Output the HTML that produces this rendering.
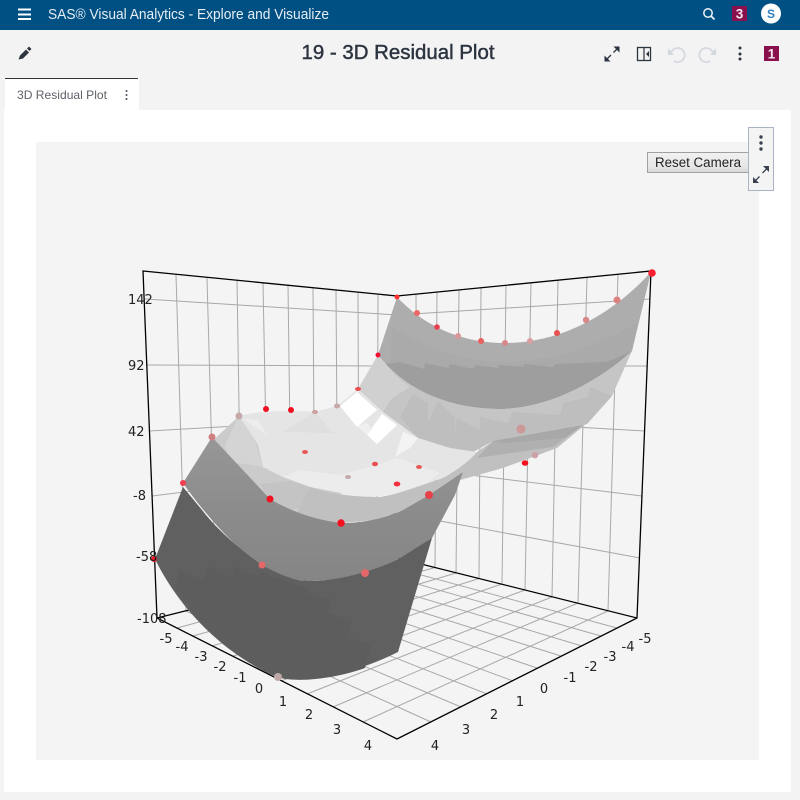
<!DOCTYPE html>
<html><head><meta charset="utf-8"><title>19 - 3D Residual Plot</title>
<style>
html,body{margin:0;padding:0;width:800px;height:800px;overflow:hidden;background:#f3f3f3}
svg{position:absolute;left:0;top:0}
</style></head><body>
<svg width="800" height="800" viewBox="0 0 800 800" xmlns="http://www.w3.org/2000/svg" font-family="'Liberation Sans',sans-serif">
<rect width="800" height="800" fill="#f3f3f3"/>
<rect width="800" height="30" fill="#005084"/>
<path d="M18 9.500h13M18 14.500h13M18 19h13" stroke="#fff" stroke-width="2"/>
<text x="48" y="19" font-size="14.400" fill="#e6eef4" textLength="281" lengthAdjust="spacingAndGlyphs">SAS® Visual Analytics - Explore and Visualize</text>
<circle cx="708" cy="13" r="4.200" fill="none" stroke="#f0f4f7" stroke-width="1.500"/><path d="M711 16l3.500 3.500" stroke="#f0f4f7" stroke-width="1.700"/>
<rect x="732" y="6" width="15" height="15" fill="#8a0f4d"/>
<text x="739.500" y="18.500" font-size="13.500" font-weight="bold" fill="#f2e6ec" text-anchor="middle">3</text>
<circle cx="771" cy="13.500" r="10" fill="#fff"/>
<text x="771" y="18" font-size="12" font-weight="bold" fill="#2f7fc1" text-anchor="middle">S</text>

<path d="M18.500 59.500l1.500-4 6-6 3 3-6 6z" fill="#2f3540"/><path d="M27 48.500l2-2 2.500 2.500-2 2z" fill="#2f3540"/>
<text x="398" y="59" font-size="20.500" fill="#2b3440" stroke="#2b3440" stroke-width=".45" text-anchor="middle" textLength="193" lengthAdjust="spacingAndGlyphs">19 - 3D Residual Plot</text>

<g stroke="#2b3440" fill="#2b3440">
<path d="M606.500 59.500l4.500-4.500M613.500 52.500l4.500-4.500" stroke-width="1.300"/>
<path d="M604.500 61.500v-6l6 6zM619.500 46.500v6l-6-6z" stroke="none"/>
<rect x="637.500" y="47.500" width="13" height="13" fill="none" stroke-width="1.300"/>
<path d="M644 47v14" stroke-width="1.200"/><path d="M649 51v6l-3-3z" stroke="none"/>
<circle cx="740" cy="48" r="1.500" stroke="none"/><circle cx="740" cy="54" r="1.500" stroke="none"/><circle cx="740" cy="59" r="1.500" stroke="none"/>
</g>
<g stroke="#d3d7de" fill="none" stroke-width="1.700">
<path d="M671 53a7 7 0 1 1 3 8"/><path d="M713 53a7 7 0 1 0-3 8"/>
</g>
<path d="M668 48v7h6zM716 48v7h-6z" fill="#d3d7de"/>
<rect x="764" y="46" width="15" height="15" fill="#8a0f4d"/>
<text x="771.500" y="58.500" font-size="13.500" font-weight="bold" fill="#f2e6ec" text-anchor="middle">1</text>

<rect x="4" y="110" width="787" height="682" fill="#fff"/>
<rect x="5" y="78" width="134" height="32" fill="#fff"/>
<path d="M5 78.500h133" stroke="#333" stroke-width="1"/>
<text x="17" y="99" font-size="12" fill="#5d6167" textLength="90" lengthAdjust="spacingAndGlyphs">3D Residual Plot</text>
<g fill="#444a52"><circle cx="126.500" cy="91" r="1"/><circle cx="126.500" cy="95" r="1"/><circle cx="126.500" cy="99" r="1"/></g>
<rect x="36" y="142" width="723" height="618" fill="#f4f4f4"/>

<!-- walls grid -->
<g stroke="#a8a8a8" stroke-width="1" fill="none">
<path d="M176 275L186 611M207 278L216 603.500M237 280L242 597.500M263 283L269 590.500M288 285L292 585M313 288L315 578.500M336 290L338 573M358 292L359 567.500M378 294L377 563"/>
<path d="M416 294L417 563M437 292L435 567.500M459 290L456 573M481 288L479 578.500M506 285L502 584M531 283L525 590M558 280L552 597M587 277L578 603M618 274L608 611"/>
<path d="M145 299L397 315M147 365L397 366M149 431L397 417M152 496L397 466M154 556L397 513"/>
<path d="M397 315L650 299M397 366L647 366M397 417L645 431M397 466L642 496M397 513L640 558"/>
<!-- floor -->
<path d="M186 611L431 722M216 603.500L461 707M242 597.500L487 694M269 590.500L513 681M292 585L537 668M315 578.500L561 656M338 573L582 646M359 567.500L601 636M377 563L617 628"/>
<path d="M417 563L177 628M435 567.500L193 636M456 573L212 646M479 578.500L233 656M502 584L257 668M525 590L281 681M552 597L307 694M578 603L333 707M608 611L363 722"/>
</g>
<g stroke="#000" stroke-width="1.300" fill="none">
<path d="M143 271L397 296L651 271L637 618L397 739L157 618Z"/>
<path d="M157 618L397 558L637 618"/>
</g>

<!-- surface -->
<defs><linearGradient id="mg" x1="0" y1="0" x2="0" y2="1"><stop offset="0" stop-color="#979797"/><stop offset=".5" stop-color="#8c8c8c"/><stop offset="1" stop-color="#858585"/></linearGradient>
<linearGradient id="g" x1="0" y1="0" x2="0" y2="1"><stop offset="0" stop-color="#f2f2f2"/><stop offset=".7" stop-color="#e6e6e6"/><stop offset="1" stop-color="#d6d6d6"/></linearGradient></defs>
<g>
<!-- back band -->
<path fill="#adadad" d="M397 297C430 332 470 343 505 343C560 343 612 315 651 272L632 351C600 380 550 409 498 409C455 408 410 395 378 355Z"/>
<path fill="#aaaaaa" d="M392 326C430 352 470 362 505 362C550 362 600 345 638 322L632 351L607 368L480 372L390 367Z"/>
<!-- mid dark band with teeth -->
<path fill="#9e9e9e" d="M385 364L400 362L424 369L425 363L448 368L450 364L473 369L475 365L498 368L499 365L523 367L525 364L553 367L555 364L607 362L632 351C600 380 550 409 498 409C455 408 410 395 385 364Z"/>
<!-- light band -->
<path fill="#c5c5c5" d="M378 355C410 395 455 408 498 409C550 409 600 380 632 351L612 396L587 424L493 441L473 452L450 448L418 438L383 412L358 389Z"/>
<polygon fill="#d0d0d0" points="378,355 396,376 410,387 392,398 383,412 358,389"/>
<polygon fill="#bebebe" points="400,417 413,394 428,403 428,422 438,401 455,418 455,437 457,418 480,430 480,417 508,423 512,412 560,415 563,403 588,397 590,387 612,396 587,424 493,441 473,452 450,448 418,438"/>
<!-- inner light -->
<path fill="#e5e5e5" d="M239 416C255 411 290 410 315 412L337 406L358 389L383 412L418 438L450 448L477 452L463 465C450 475 440 479 427 483C400 494 380 497 360 497C330 495 300 490 283 477L262 466Z"/>
<polygon fill="#ffffff" points="340,406 357,392 377,410 357,427"/>
<polygon fill="#ffffff" points="367,435 382,414 397,425 377,444"/>
<polygon fill="#f3f3f3" points="395,457 403,432 418,438 410,448"/>
<polygon fill="#f0f0f0" points="357,426 367,423 372,429 367,435"/>
<polygon fill="#dfdfdf" points="283,432 315,412 333,433"/>
<polygon fill="#ececec" points="283,477 300,470 340,475 377,465 397,458 440,473 427,483 390,495 360,497 325,492"/>
<polygon fill="#ededed" points="244,419 258,420 268,436 256,428"/>
<!-- shoulder -->
<polygon fill="#cbcbcb" points="208,445 239,416 258,445 263,467 283,477 310,487 341,493 341,528 297,520 270,505"/>
<polygon fill="#d4d4d4" points="239,416 255,440 263,467 253,465 230,462 225,445"/>
<polygon fill="#c4c4c4" points="260,484 290,481 310,487 310,505 290,510 270,499"/>
<!-- front fold band -->
<path fill="#c0c0c0" d="M310 487C330 495 360 497 380 497C400 494 427 483 440 479C450 475 465 465 477 452L493 441L587 423L557 448L503 468L460 480L463 472L429 495L403 510L375 520L341 523C325 522 312 518 297 513Z"/>
<polygon fill="#b0b0b0" points="493,441 583,425 553,447 477,458"/>
<polygon fill="#a8a8a8" points="493,441 583,425 565,438 505,443"/>
<!-- mid gray -->
<path fill="url(#mg)" d="M212 437L270 499C290 511 315 520 341 523C365 523 385 518 403 510L429 495L463 472L455 495L432 538C420 546 410 552 400 558C385 567 350 581 307 581C285 580 262 565 262 565C240 553 205 515 183 483Z"/>
<!-- dark -->
<path fill="#606060" d="M155 559L183 487L202 510C225 540 262 565 262 565C285 578 300 581 307 581C340 582 385 567 400 558L432 538L398 652C350 676 300 684 277 677C225 655 180 610 155 559Z"/>
<path fill="#5d5d5d" d="M175 587L180 570L203 580L208 567L232 577L235 567L258 576L260 572L307 588L307 593L332 600L327 613L352 621L347 638L371 644L365 668C340 677 300 684 277 677C240 662 200 628 175 587Z"/>
</g>

<!-- points -->
<g>
<circle cx="397" cy="297" r="2.500" fill="#f33"/><circle cx="378" cy="355" r="2.500" fill="#f01030"/>
<ellipse cx="358" cy="389" rx="3" ry="2" fill="#e94f4f"/><ellipse cx="337" cy="406" rx="3" ry="2.500" fill="#c8a8a8"/>
<ellipse cx="315" cy="412" rx="3" ry="2" fill="#cda0a0"/><circle cx="291" cy="410" r="3" fill="#f01020"/>
<circle cx="266" cy="409" r="3" fill="#f01020"/><circle cx="239" cy="416" r="3.500" fill="#c6a8a8"/>
<circle cx="212" cy="437" r="3.500" fill="#d08080"/><circle cx="183" cy="483" r="3" fill="#f24050"/>
<circle cx="270" cy="499" r="3.500" fill="#f01020"/><ellipse cx="305" cy="452" rx="3" ry="2" fill="#e85a5a"/>
<ellipse cx="375" cy="464" rx="3" ry="2.300" fill="#e85050"/><ellipse cx="348" cy="477" rx="3" ry="2" fill="#c2aaaa"/>
<ellipse cx="397" cy="484" rx="3.300" ry="2.500" fill="#f33040"/>
<circle cx="417" cy="313" r="3" fill="#e66"/><circle cx="437" cy="327" r="2.800" fill="#e84050"/>
<circle cx="458" cy="336" r="3" fill="#d89898"/><circle cx="481" cy="341" r="3" fill="#e96060"/>
<circle cx="505" cy="343" r="3" fill="#d88888"/><circle cx="530" cy="341" r="3" fill="#d8a0a0"/>
<circle cx="557" cy="333" r="3" fill="#e85050"/><circle cx="586" cy="320" r="3.200" fill="#d88888"/>
<circle cx="617" cy="300" r="3.500" fill="#dc8080"/><circle cx="652" cy="273" r="3.800" fill="#f82030"/>
<circle cx="521" cy="429" r="4.500" fill="#cc9898"/><circle cx="535" cy="455" r="3.300" fill="#caa2a8"/>
<ellipse cx="525" cy="463" rx="3.300" ry="2.800" fill="#f51020"/><ellipse cx="419" cy="467" rx="3" ry="2" fill="#e85a5a"/>
<circle cx="429" cy="495" r="4" fill="#e84048"/>
<circle cx="154" cy="559" r="3" fill="#f01828"/><circle cx="262" cy="565" r="3.500" fill="#e56868"/>
<circle cx="365" cy="573" r="4" fill="#e56868"/><circle cx="341" cy="523" r="3.700" fill="#f51020"/>
<circle cx="278" cy="677" r="4" fill="#c0a8a8"/>
</g>

<!-- axis labels -->
<g font-family="'DejaVu Sans',sans-serif" font-size="13" fill="#222">
<text x="128" y="304">142</text><text x="128" y="370">92</text><text x="128" y="436">42</text>
<text x="133" y="500">-8</text><text x="136" y="561">-58</text><text x="137" y="623">-108</text>
<g text-anchor="middle">
<text x="166" y="643">-5</text><text x="182" y="651">-4</text><text x="201" y="661">-3</text><text x="220" y="671">-2</text><text x="240" y="682">-1</text><text x="259" y="693">0</text><text x="283" y="706">1</text><text x="309" y="719">2</text><text x="337" y="734">3</text><text x="368" y="750">4</text>
<text x="645" y="643">-5</text><text x="628" y="651">-4</text><text x="610" y="661">-3</text><text x="591" y="671">-2</text><text x="570" y="682">-1</text><text x="544" y="693">0</text><text x="520" y="706">1</text><text x="494" y="719">2</text><text x="466" y="734">3</text><text x="435" y="750">4</text>
</g></g>

<!-- reset + overlay -->
<rect x="647.500" y="152.500" width="103" height="20" fill="url(#g)" stroke="#a0a0a0"/>
<text x="655" y="167" font-size="13.500" fill="#222" textLength="86" lengthAdjust="spacingAndGlyphs">Reset Camera</text>
<rect x="748.500" y="127.500" width="25" height="63" fill="#f4f4f4" stroke="#a9b3c4"/>
<g fill="#3a4250"><circle cx="761" cy="137" r="1.700"/><circle cx="761" cy="143" r="1.700"/><circle cx="761" cy="149" r="1.700"/>
<path d="M753 183v-6l6 6zM769 166v6l-6-6z"/></g>
<path d="M755 181l4.500-4.500M762.500 173l4.500-4.500" stroke="#3a4250" stroke-width="1.300"/>
</svg>
</body></html>
